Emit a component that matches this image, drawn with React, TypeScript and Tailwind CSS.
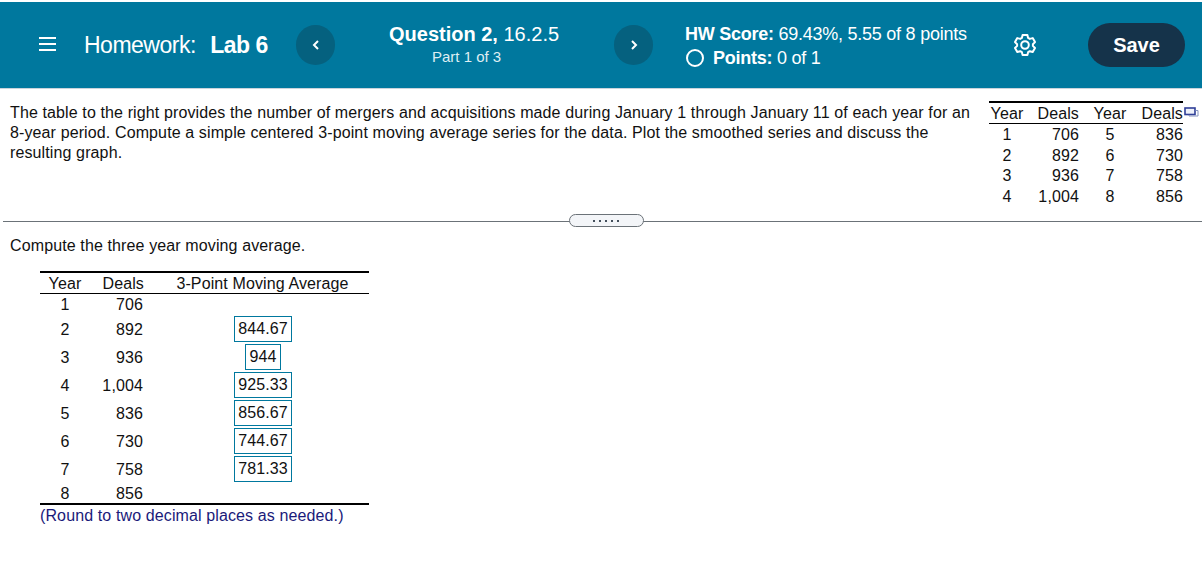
import React from "react";

const top = [
  { r: ["1", "706", "5", "836"], h: "h-[21.5px]" },
  { r: ["2", "892", "6", "730"], h: "h-[20.5px]" },
  { r: ["3", "936", "7", "758"], h: "h-[20.5px]" },
  { r: ["4", "1,004", "8", "856"], h: "h-[20.5px]" },
];

const rows: { y: string; d: string; a?: string; h: string }[] = [
  { y: "1", d: "706", h: "h-[22px]" },
  { y: "2", d: "892", a: "844.67", h: "h-[28px]" },
  { y: "3", d: "936", a: "944", h: "h-[28px]" },
  { y: "4", d: "1,004", a: "925.33", h: "h-[28px]" },
  { y: "5", d: "836", a: "856.67", h: "h-[28px]" },
  { y: "6", d: "730", a: "744.67", h: "h-[28px]" },
  { y: "7", d: "758", a: "781.33", h: "h-[28px]" },
  { y: "8", d: "856", h: "h-[19px]" },
];

function Gear() {
  return (
    <svg className="shrink-0" width="22" height="24" viewBox="0 0 22 24" fill="none" stroke="white" strokeWidth="2" strokeLinejoin="round">
      <path d="M8.6 2h4.8l.7 2.9 1.7 1 2.9-.8 2.3 4-2.1 2.1v1.7l2.1 2.1-2.3 4-2.9-.8-1.7 1-.7 2.8H8.6l-.7-2.8-1.7-1-2.9.8-2.3-4 2.1-2.1v-1.7L1 9.1l2.3-4 2.9.8 1.7-1z" />
      <circle cx="11" cy="12" r="3.8" />
    </svg>
  );
}

export default function App() {
  return (
    <div className="w-[1202px] h-[569px] overflow-hidden bg-white pt-[2px] font-['Liberation_Sans',Arial,sans-serif] text-[16px] leading-[20px] tracking-[0.12px] text-[#111]">
      <header className="h-[87px] bg-[#00789e] border-b border-[#c9d3dc] flex items-center text-white tracking-normal">
        <svg className="ml-[39px] mt-[-3px] shrink-0" width="17" height="16" viewBox="0 0 17 16" stroke="white" strokeWidth="2">
          <path d="M0 2h17M0 8h17M0 14h17" />
        </svg>
        <div className="ml-[28px] w-[212px] text-[23px] tracking-[-0.5px] whitespace-nowrap mt-[-1px]">
          Homework:&nbsp;<span className="ml-[8.5px] font-bold">Lab 6</span>
        </div>
        <button className="w-[39px] h-[40px] rounded-full bg-[#05617f] flex items-center justify-center">
          <svg width="8" height="12" viewBox="0 0 8 12" fill="none" stroke="white" strokeWidth="2"><path d="M6 2 2 6l4 4" /></svg>
        </button>
        <div className="ml-[54px] w-[225px] mt-[-2px]">
          <div className="text-[20px] leading-[24px] whitespace-nowrap">
            <span className="font-bold">Question 2,</span> 16.2.5
          </div>
          <div className="ml-[43px] text-[15px] leading-[20px] text-[#dfeef3] mt-[1px]">Part 1 of 3</div>
        </div>
        <button className="w-[39px] h-[40px] rounded-full bg-[#05617f] flex items-center justify-center">
          <svg width="8" height="12" viewBox="0 0 8 12" fill="none" stroke="white" strokeWidth="2"><path d="m2 2 4 4-4 4" /></svg>
        </button>
        <div className="ml-[32px] w-[329px] mt-[1px]">
          <div className="text-[18px] leading-[24px] tracking-[-0.25px] whitespace-nowrap">
            <span className="font-bold">HW Score:</span> 69.43%, 5.55 of 8 points
          </div>
          <div className="flex items-center text-[18px] leading-[24px] tracking-[-0.25px] whitespace-nowrap">
            <span className="w-[18px] h-[18px] rounded-full border-[2.5px] border-white mr-[9px] ml-[1px]" />
            <span className="font-bold">Points:</span>&nbsp;0 of 1
          </div>
        </div>
        <Gear />
        <button className="ml-[52px] w-[97px] h-[44px] rounded-full bg-[#15334a] text-[20px] font-bold">Save</button>
      </header>

      <section className="flex h-[133px] border-b border-[#6b7278] ml-[3px]">
        <p className="ml-[7px] mt-[14px] w-[965px] shrink-0">
          The table to the right provides the number of mergers and acquisitions made during January 1 through January 11 of each year for an 8-year period. Compute a simple centered 3-point moving average series for the data. Plot the smoothed series and discuss the resulting graph.
        </p>
        <div className="ml-[14px] mt-[12px] w-[194px] relative">
          <div className="grid grid-cols-[36px_54px_62px_42px] border-t-2 border-black">
            <div className="col-span-4 grid grid-cols-subgrid border-b border-black h-[21px] pt-[1px]">
              <span className="text-center">Year</span>
              <span className="text-right">Deals</span>
              <span className="text-center">Year</span>
              <span className="text-right whitespace-nowrap">Deals</span>
            </div>
            {top.map(({ r, h }) => (
              <div key={r[0]} className={`col-span-4 grid grid-cols-subgrid items-center ${h}`}>
                <span className="text-center">{r[0]}</span>
                <span className="text-right">{r[1]}</span>
                <span className="text-center">{r[2]}</span>
                <span className="text-right">{r[3]}</span>
              </div>
            ))}
          </div>
          <svg className="absolute left-[195px] top-[4px]" width="15" height="13" viewBox="0 0 15 13" fill="none">
            <rect x="1" y="3" width="10" height="6.5" fill="#eef1fa" stroke="#2f3f98" strokeWidth="1.6" />
            <path d="M11.5 5.5H14V11H5V9.8" stroke="#8592bd" />
          </svg>
        </div>
      </section>

      <div className="flex justify-center mt-[-8px] pl-[10px] mb-[-8px] relative">
        <div className="w-[75px] h-[13px] rounded-full border border-[#6b7278] bg-[#f3f5f8] flex items-center justify-center gap-[4px]">
          {[0, 1, 2, 3, 4].map((i) => (
            <span key={i} className="w-[2px] h-[2px] bg-[#44505c]" />
          ))}
        </div>
      </div>

      <main className="pl-[10px] pt-[17px]">
        <p>Compute the three year moving average.</p>
        <div className="ml-[30px] mt-[15px] w-[329px] border-t-2 border-black border-b-2 grid grid-cols-[50px_54px_225px]">
          <div className="col-span-3 grid grid-cols-subgrid border-b border-black h-[21px] pt-[1px]">
            <span className="text-center">Year</span>
            <span className="text-right">Deals</span>
            <span className="text-center pl-[12px]">3-Point Moving Average</span>
          </div>
          {rows.map((r) => (
            <div key={r.y} className={`col-span-3 grid grid-cols-subgrid items-center ${r.h}`}>
              <span className="text-center">{r.y}</span>
              <span className="text-right pr-[1px]">{r.d}</span>
              {r.a ? (
                <div className="flex justify-center pl-[13px] mb-[2px]">
                  <span className="h-[26px] px-[3px] border border-[#00789e] leading-[24px]">{r.a}</span>
                </div>
              ) : (
                <span />
              )}
            </div>
          ))}
        </div>
        <p className="ml-[30px] mt-[1px] text-[#1a1a7a]">(Round to two decimal places as needed.)</p>
      </main>
    </div>
  );
}
